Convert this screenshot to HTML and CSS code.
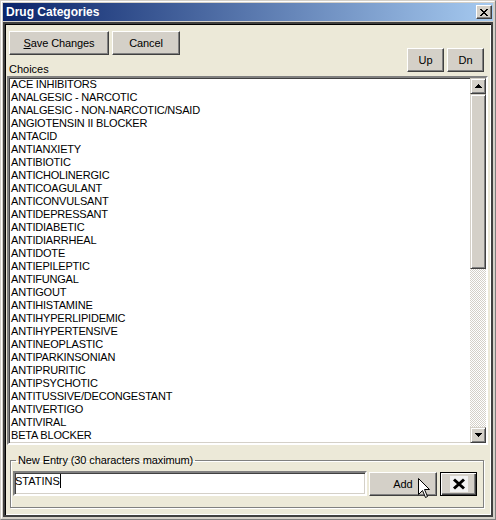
FILE: index.html
```html
<!DOCTYPE html>
<html>
<head>
<meta charset="utf-8">
<title>Drug Categories</title>
<link rel="stylesheet" href="styles.css">
</head>
<body>
<div class="window">
  <div class="frame">
    <div class="titlebar">
      <span class="title">Drug Categories</span>
      <span class="close-btn">
        <svg width="8" height="7" viewBox="0 0 8 7" shape-rendering="crispEdges"><path d="M0 0h2v1h-2zM6 0h2v1h-2zM1 1h2v1h-2zM5 1h2v1h-2zM2 2h4v1h-4zM3 3h2v1h-2zM2 4h4v1h-4zM1 5h2v1h-2zM5 5h2v1h-2zM0 6h2v1h-2zM6 6h2v1h-2z" fill="#000"/></svg>
      </span>
    </div>
    <div class="client">
      <div class="top">
        <div class="top-left">
          <div class="btn-row">
            <div class="btn btn-save"><span class="ul">S</span>ave Changes</div>
            <div class="btn btn-cancel">Cancel</div>
          </div>
          <div class="label">Choices</div>
        </div>
        <div class="top-right">
          <div class="btn btn-small">Up</div>
          <div class="btn btn-small">Dn</div>
        </div>
      </div>
      <div class="listbox">
        <ul class="items">
          <li>ACE INHIBITORS</li>
          <li>ANALGESIC - NARCOTIC</li>
          <li>ANALGESIC - NON-NARCOTIC/NSAID</li>
          <li>ANGIOTENSIN II BLOCKER</li>
          <li>ANTACID</li>
          <li>ANTIANXIETY</li>
          <li>ANTIBIOTIC</li>
          <li>ANTICHOLINERGIC</li>
          <li>ANTICOAGULANT</li>
          <li>ANTICONVULSANT</li>
          <li>ANTIDEPRESSANT</li>
          <li>ANTIDIABETIC</li>
          <li>ANTIDIARRHEAL</li>
          <li>ANTIDOTE</li>
          <li>ANTIEPILEPTIC</li>
          <li>ANTIFUNGAL</li>
          <li>ANTIGOUT</li>
          <li>ANTIHISTAMINE</li>
          <li>ANTIHYPERLIPIDEMIC</li>
          <li>ANTIHYPERTENSIVE</li>
          <li>ANTINEOPLASTIC</li>
          <li>ANTIPARKINSONIAN</li>
          <li>ANTIPRURITIC</li>
          <li>ANTIPSYCHOTIC</li>
          <li>ANTITUSSIVE/DECONGESTANT</li>
          <li>ANTIVERTIGO</li>
          <li>ANTIVIRAL</li>
          <li>BETA BLOCKER</li>
        </ul>
        <div class="scrollbar">
          <div class="sb-btn">
            <svg width="7" height="4" viewBox="0 0 7 4" shape-rendering="crispEdges"><path d="M3 0h1v1h-1zM2 1h3v1h-3zM1 2h5v1h-5zM0 3h7v1h-7z" fill="#000"/></svg>
          </div>
          <div class="sb-thumb"></div>
          <div class="sb-track"></div>
          <div class="sb-btn">
            <svg width="7" height="4" viewBox="0 0 7 4" shape-rendering="crispEdges"><path d="M0 0h7v1h-7zM1 1h5v1h-5zM2 2h3v1h-3zM3 3h1v1h-1z" fill="#000"/></svg>
          </div>
        </div>
      </div>
      <fieldset class="group">
        <legend>New Entry (30 characters maximum)</legend>
        <div class="entry-row">
          <div class="input">STATINS<span class="caret"></span></div>
          <div class="btn btn-add">Add</div>
          <div class="btn btn-x">
            <svg width="18" height="16" viewBox="0 0 18 16"><rect width="18" height="16" fill="#f2f2f2"/><path d="M4 3.5L14 12.5M14 3.5L4 12.5" stroke="#000" stroke-width="3"/></svg>
          </div>
        </div>
      </fieldset>
    </div>
  </div>
  <svg class="cursor" width="13" height="21" viewBox="0 0 13 21"><path d="M0.5 0.5L0.5 16.5L4.5 12.5L7.5 19.5L9.5 18.5L6.5 11.5L11.5 11.5Z" fill="#fff" stroke="#000" stroke-width="1" stroke-linejoin="miter"/></svg>
</div>
</body>
</html>
```

FILE: styles.css
```css
* { box-sizing: border-box; }
html, body { margin: 0; padding: 0; }
body {
  width: 496px;
  height: 520px;
  overflow: hidden;
  background: #d4d0c8;
  font-family: "Liberation Sans", Arial, sans-serif;
  font-size: 11px;
  color: #000;
}
.window {
  position: relative;
  width: 496px;
  height: 520px;
  border: 1px solid;
  border-color: #d4d0c8 #808080 #808080 #d4d0c8;
  background: #d4d0c8;
}
.frame {
  height: 100%;
  border: 1px solid;
  border-color: #fff #d4d0c8 #d4d0c8 #fff;
  padding: 1px;
  display: flex;
  flex-direction: column;
}
.titlebar {
  flex: none;
  height: 18px;
  background: linear-gradient(to right, #0a246a, #a6caf0);
  display: flex;
  align-items: center;
  justify-content: space-between;
  padding: 0 1px 0 3px;
}
.title {
  color: #fff;
  font-weight: bold;
  font-size: 12px;
  letter-spacing: 0;
}
.close-btn {
  width: 16px;
  height: 14px;
  background: #d4d0c8;
  border: 1px solid;
  border-color: #fff #404040 #404040 #fff;
  box-shadow: inset -1px -1px #808080;
  display: flex;
  align-items: center;
  justify-content: center;
}
.client {
  flex: 1;
  margin-top: 1px;
  background: #ece9d8;
  border: 2px solid;
  border-color: #404040 #404040 #404040 #404040;
  box-shadow: inset 1px 1px #000, inset -1px -1px #fff;
  display: flex;
  flex-direction: column;
}
.btn {
  background: #d4d0c8;
  border: 1px solid;
  border-color: #fff #404040 #404040 #fff;
  box-shadow: inset -1px -1px #808080;
  height: 24px;
  display: flex;
  align-items: center;
  justify-content: center;
  letter-spacing: -0.1px;
}
.ul { text-decoration: underline; }
.top {
  display: flex;
  justify-content: space-between;
  align-items: flex-start;
  padding: 7px 7px 0 4px;
}
.btn-row { display: flex; gap: 3px; }
.btn-save { width: 100px; }
.btn-cancel { width: 68px; }
.label {
  margin-top: 8px;
  line-height: 13px;
  height: 13px;
}
.top-right {
  display: flex;
  gap: 3px;
  margin-top: 17px;
}
.btn-small { width: 37px; }
.listbox {
  margin: 0 3px 0 2px;
  height: 369px;
  flex: none;
  background: #fff;
  border: 2px solid;
  border-color: #808080 #fff #fff #808080;
  box-shadow: inset 1px 1px #404040, inset -1px -1px #d4d0c8;
  display: flex;
}
.items {
  flex: 1;
  list-style: none;
  margin: 0;
  padding: 0 0 0 2px;
  letter-spacing: -0.2px;
}
.items li {
  height: 13px;
  line-height: 13px;
  white-space: nowrap;
}
.scrollbar {
  width: 16px;
  display: flex;
  flex-direction: column;
}
.sb-btn {
  flex: none;
  height: 16px;
  background: #d4d0c8;
  border: 1px solid;
  border-color: #d4d0c8 #404040 #404040 #d4d0c8;
  box-shadow: inset 1px 1px #fff, inset -1px -1px #808080;
  display: flex;
  align-items: center;
  justify-content: center;
}
.sb-thumb {
  flex: none;
  height: 175px;
  background: #d4d0c8;
  border: 1px solid;
  border-color: #d4d0c8 #404040 #404040 #d4d0c8;
  box-shadow: inset 1px 1px #fff, inset -1px -1px #808080;
}
.sb-track {
  flex: 1;
  background: repeating-conic-gradient(#d4d0c8 0 25%, #fff 0 50%) 0 0 / 2px 2px;
}
.group {
  margin: 9px 7px 0 5px;
  padding: 0;
  min-width: 0;
  border: 1px solid #808080;
  box-shadow: 1px 1px 0 #fff, inset 1px 1px 0 #fff;
}
.group legend {
  margin-left: 5px;
  padding: 0 2px;
  line-height: 13px;
  letter-spacing: -0.1px;
}
.entry-row {
  display: flex;
  align-items: flex-start;
  margin: 4px 0 11px 2px;
}
.input {
  width: 354px;
  height: 25px;
  background: #fff;
  border: 2px solid;
  border-color: #808080 #fff #fff #808080;
  box-shadow: inset 1px 1px #404040, inset -1px -1px #d4d0c8;
  padding-top: 2px;
  line-height: 13px;
  display: flex;
  align-items: flex-start;
}
.caret {
  display: inline-block;
  width: 1px;
  height: 14px;
  background: #000;
  margin-top: -1px;
}
.btn-add {
  width: 68px;
  margin: 1px 0 0 2px;
}
.btn-x {
  width: 37px;
  margin: 1px 0 0 3px;
  border: 1px solid #000;
  box-shadow: inset 1px 1px #fff, inset -1px -1px #404040, inset -2px -2px #808080;
}
.cursor {
  position: absolute;
  left: 417px;
  top: 477px;
}
```
